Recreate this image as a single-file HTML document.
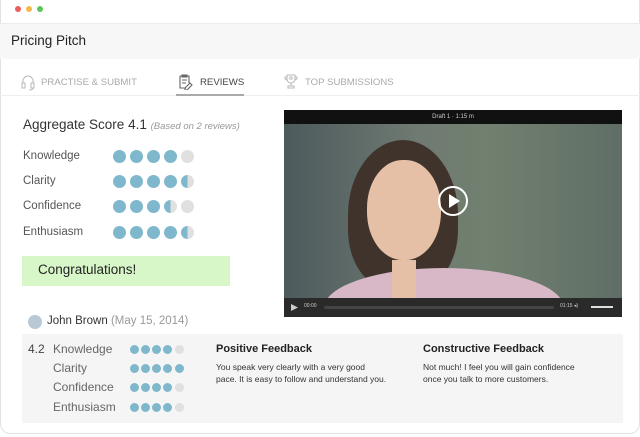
<!DOCTYPE html>
<html><head><meta charset="utf-8"><style>
*{margin:0;padding:0;box-sizing:border-box}
body{width:640px;height:437px;background:#fff;font-family:"Liberation Sans",sans-serif;position:relative;overflow:hidden}
.win{position:absolute;left:0;top:0;width:640px;height:434px;border:1px solid #e2e2e2;border-top:none;border-radius:0 0 10px 10px;background:#fff}
.a{position:absolute}
.d{position:absolute;border-radius:50%;background:#7fb8cc}
.g{background:#e0e0e0}
.h{background:linear-gradient(90deg,#7fb8cc 50%,#e0e0e0 50%)}
.lbl{position:absolute;font-size:11.5px;color:#555}
.bl{position:absolute;font-size:12px;color:#666}
</style></head><body>
<div class="win"></div>
<div class="a" style="left:15px;top:6px;width:6px;height:6px;border-radius:50%;background:#ee5c5c"></div>
<div class="a" style="left:26px;top:6px;width:6px;height:6px;border-radius:50%;background:#f5b94a"></div>
<div class="a" style="left:37px;top:6px;width:6px;height:6px;border-radius:50%;background:#5cc55c"></div>
<div class="a" style="left:0;top:23px;width:640px;height:36px;background:#f7f7f7;border-top:1px solid #ececec"></div>
<div class="a" style="left:11px;top:33px;font-size:13.5px;color:#222">Pricing Pitch</div>
<div class="a" style="left:0;top:95px;width:640px;height:1px;background:#eee"></div>
<svg class="a" style="left:21px;top:74px" width="14" height="17" viewBox="0 0 14 17"><path d="M2 9V7a5 5 0 0 1 10 0v2M1 9h3v5H1zM10 9h3v5h-3zM12 14q0 2-4 2" fill="none" stroke="#bbb" stroke-width="1.1"/></svg>
<div class="a" style="left:41px;top:77px;font-size:9.6px;color:#aaa">PRACTISE &amp; SUBMIT</div>
<svg class="a" style="left:177px;top:73px" width="16" height="17" viewBox="0 0 16 17"><path d="M3 3h9v7M3 3v12h6M5 2h5v2H5zM5 7h5M5 10h4M8 15l5-5 2 2-5 5h-2z" fill="none" stroke="#666" stroke-width="1.1"/></svg>
<div class="a" style="left:200px;top:77px;font-size:9.6px;color:#444">REVIEWS</div>
<div class="a" style="left:176px;top:94px;width:68px;height:2px;background:#aaa"></div>
<svg class="a" style="left:284px;top:73px" width="14" height="17" viewBox="0 0 14 17"><path d="M3 2h8v4a4 4 0 0 1-8 0zM3 4H1q0 3 2 3M11 4h2q0 3-2 3M7 10v3M4 15h6v-2H4z" fill="none" stroke="#bbb" stroke-width="1.1"/><circle cx="7" cy="5" r="1.3" fill="none" stroke="#bbb"/></svg>
<div class="a" style="left:305px;top:77px;font-size:9.6px;color:#aaa">TOP SUBMISSIONS</div>

<div class="a" style="left:23px;top:117px;font-size:13.5px;color:#333">Aggregate Score 4.1 <span style="font-size:9.5px;color:#999;font-style:italic">(Based on 2 reviews)</span></div>
<div class="lbl" style="left:23px;top:150px">Knowledge</div>
<div class="lbl" style="left:23px;top:175px">Clarity</div>
<div class="lbl" style="left:23px;top:200px">Confidence</div>
<div class="lbl" style="left:23px;top:226px">Enthusiasm</div>
<div class="d" style="left:113px;top:150px;width:13px;height:13px"></div><div class="d" style="left:130px;top:150px;width:13px;height:13px"></div><div class="d" style="left:147px;top:150px;width:13px;height:13px"></div><div class="d" style="left:164px;top:150px;width:13px;height:13px"></div><div class="d g" style="left:181px;top:150px;width:13px;height:13px"></div>
<div class="d" style="left:113px;top:175px;width:13px;height:13px"></div><div class="d" style="left:130px;top:175px;width:13px;height:13px"></div><div class="d" style="left:147px;top:175px;width:13px;height:13px"></div><div class="d" style="left:164px;top:175px;width:13px;height:13px"></div><div class="d h" style="left:181px;top:175px;width:13px;height:13px"></div>
<div class="d" style="left:113px;top:200px;width:13px;height:13px"></div><div class="d" style="left:130px;top:200px;width:13px;height:13px"></div><div class="d" style="left:147px;top:200px;width:13px;height:13px"></div><div class="d h" style="left:164px;top:200px;width:13px;height:13px"></div><div class="d g" style="left:181px;top:200px;width:13px;height:13px"></div>
<div class="d" style="left:113px;top:226px;width:13px;height:13px"></div><div class="d" style="left:130px;top:226px;width:13px;height:13px"></div><div class="d" style="left:147px;top:226px;width:13px;height:13px"></div><div class="d" style="left:164px;top:226px;width:13px;height:13px"></div><div class="d h" style="left:181px;top:226px;width:13px;height:13px"></div>
<div class="a" style="left:22px;top:256px;width:208px;height:30px;background:#d8f7c9"></div>
<div class="a" style="left:38px;top:262px;font-size:13.5px;color:#222">Congratulations!</div>

<div class="a" style="left:284px;top:110px;width:338px;height:207px;overflow:hidden;background:linear-gradient(90deg,#4d5a5c,#6f7a72 40%,#71806f 60%,#5f6e66)">
<div class="a" style="left:64px;top:30px;width:110px;height:150px;border-radius:50% 50% 40% 40%;background:#3f332c"></div>
<div class="a" style="left:83px;top:50px;width:74px;height:100px;border-radius:48%;background:#e6c0a6"></div>
<div class="a" style="left:0;top:158px;width:240px;height:80px;border-radius:50% 50% 0 0;background:#d8b8c6;left:40px"></div>
<div class="a" style="left:108px;top:150px;width:24px;height:40px;background:#e6c0a6"></div>
</div>
<div class="a" style="left:284px;top:110px;width:338px;height:14px;background:#111;color:#ccc;font-size:6px;text-align:center;line-height:14px">Draft 1 · 1:15 m</div>
<div class="a" style="left:438px;top:186px;width:30px;height:30px;border:2.5px solid #fff;border-radius:50%"></div>
<svg class="a" style="left:448px;top:194px" width="13" height="14"><path d="M1 0L12 7L1 14z" fill="#fff"/></svg>
<div class="a" style="left:284px;top:298px;width:338px;height:19px;background:#2a2a2a"></div>
<svg class="a" style="left:291px;top:304px" width="7" height="7"><path d="M0 0L7 3.5L0 7z" fill="#ccc"/></svg>
<div class="a" style="left:304px;top:303px;font-size:5px;color:#ccc">00:00</div>
<div class="a" style="left:324px;top:306px;width:230px;height:3px;background:#444;border-radius:2px"></div>
<div class="a" style="left:560px;top:303px;font-size:5px;color:#ccc">01:15 ◂)</div>
<div class="a" style="left:591px;top:306px;width:22px;height:2px;background:#ddd"></div>

<div class="a" style="left:28px;top:315px;width:14px;height:14px;border-radius:50%;background:#b8c8d4"></div>
<div class="a" style="left:47px;top:315px;font-size:11.5px;color:#333">John Brown <span style="color:#999">(May 15, 2014)</span></div>
<div class="a" style="left:22px;top:334px;width:601px;height:89px;background:#f5f5f5"></div>
<div class="a" style="left:28px;top:342px;font-size:12px;color:#444">4.2</div>
<div class="bl" style="left:53px;top:342px">Knowledge</div>
<div class="bl" style="left:53px;top:361px">Clarity</div>
<div class="bl" style="left:53px;top:380px">Confidence</div>
<div class="bl" style="left:53px;top:400px">Enthusiasm</div>
<div class="d" style="left:130px;top:345px;width:9px;height:9px"></div><div class="d" style="left:141px;top:345px;width:9px;height:9px"></div><div class="d" style="left:152px;top:345px;width:9px;height:9px"></div><div class="d" style="left:163px;top:345px;width:9px;height:9px"></div><div class="d g" style="left:175px;top:345px;width:9px;height:9px"></div>
<div class="d" style="left:130px;top:364px;width:9px;height:9px"></div><div class="d" style="left:141px;top:364px;width:9px;height:9px"></div><div class="d" style="left:152px;top:364px;width:9px;height:9px"></div><div class="d" style="left:163px;top:364px;width:9px;height:9px"></div><div class="d" style="left:175px;top:364px;width:9px;height:9px"></div>
<div class="d" style="left:130px;top:383px;width:9px;height:9px"></div><div class="d" style="left:141px;top:383px;width:9px;height:9px"></div><div class="d" style="left:152px;top:383px;width:9px;height:9px"></div><div class="d" style="left:163px;top:383px;width:9px;height:9px"></div><div class="d g" style="left:175px;top:383px;width:9px;height:9px"></div>
<div class="d" style="left:130px;top:403px;width:9px;height:9px"></div><div class="d" style="left:141px;top:403px;width:9px;height:9px"></div><div class="d" style="left:152px;top:403px;width:9px;height:9px"></div><div class="d" style="left:163px;top:403px;width:9px;height:9px"></div><div class="d g" style="left:175px;top:403px;width:9px;height:9px"></div>
<div class="a" style="left:216px;top:343px;font-size:11px;font-weight:bold;color:#222">Positive Feedback</div>
<div class="a" style="left:216px;top:361px;width:172px;font-size:8.5px;line-height:12px;color:#333">You speak very clearly with a very good pace. It is easy to follow and understand you.</div>
<div class="a" style="left:423px;top:343px;font-size:11px;font-weight:bold;color:#222">Constructive Feedback</div>
<div class="a" style="left:423px;top:361px;width:168px;font-size:8.5px;line-height:12px;color:#333">Not much! I feel you will gain confidence once you talk to more customers.</div>
</body></html>
